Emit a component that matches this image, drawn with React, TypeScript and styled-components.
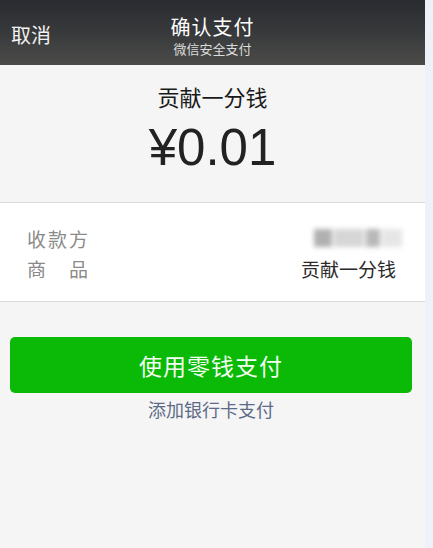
import React from "react";
import styled, { createGlobalStyle } from "styled-components";

const GlobalStyle = createGlobalStyle`
  html, body {
    margin: 0;
    padding: 0;
    height: 100%;
    background: #eef2f8;
  }
  body {
    font-family: "Liberation Sans", "Noto Sans CJK SC", sans-serif;
  }
  #root {
    height: 100%;
  }
`;

const Page = styled.div`
  display: flex;
  height: 548px;
  overflow: hidden;
`;

const Screen = styled.div`
  width: 425px;
  display: flex;
  flex-direction: column;
  background: #f5f5f5;
`;

const Edge = styled.div`
  flex: 1;
  background: #eef2f8;
`;

const NavBar = styled.header`
  position: relative;
  height: 65px;
  display: flex;
  flex-direction: column;
  align-items: center;
  justify-content: center;
  padding-top: 8px;
  box-sizing: border-box;
  background: linear-gradient(#2a2b30, #38393b 50%, #4b4c49);
  color: #fff;
`;

const Cancel = styled.span`
  position: absolute;
  left: 11px;
  top: 22px;
  font-size: 20px;
  line-height: 28px;
  color: #f2f2f2;
`;

const NavTitle = styled.div`
  font-size: 20px;
  line-height: 26px;
  letter-spacing: 1px;
`;

const NavSub = styled.div`
  font-size: 13px;
  line-height: 17px;
  color: #dcdcdc;
`;

const Summary = styled.section`
  display: flex;
  flex-direction: column;
  align-items: center;
  padding: 19px 0 24px;
  border-bottom: 1px solid #dcdcdc;
`;

const GoodsName = styled.div`
  font-size: 22px;
  line-height: 30px;
  color: #1a1a1a;
`;

const Amount = styled.div`
  margin-top: 4px;
  font-size: 51px;
  line-height: 60px;
  color: #222;
  font-family: "Liberation Sans", sans-serif;
`;

const InfoList = styled.section`
  background: #fff;
  padding: 20px 29px 18px 27px;
  border-bottom: 1px solid #dcdcdc;
`;

const InfoRow = styled.div`
  display: flex;
  justify-content: space-between;
  align-items: center;
  height: 30px;
`;

const Label = styled.span`
  width: 61px;
  font-size: 19px;
  color: #8a8a8a;
  text-align: justify;
  text-align-last: justify;
`;

const Value = styled.span`
  font-size: 19px;
  color: #2a2a2a;
`;

const Blurred = styled.span`
  display: flex;
  gap: 2px;
  filter: blur(2.5px);
  margin-right: -6px;
`;

const Blot = styled.span<{ $w: number; $tone: string }>`
  width: ${(p) => p.$w}px;
  height: 18px;
  background: ${(p) => p.$tone};
`;

const Actions = styled.div`
  display: flex;
  flex-direction: column;
  align-items: center;
  padding: 35px 13px 0 10px;
`;

const PayButton = styled.button`
  width: 100%;
  height: 56px;
  border: none;
  border-radius: 5px;
  background: #0bba07;
  color: #f4fff2;
  font-family: inherit;
  font-size: 23px;
  letter-spacing: 1px;
`;

const AltLink = styled.a`
  font-size: 18px;
  line-height: 36px;
  color: #5d6b87;
  text-decoration: none;
`;

export default function App() {
  return (
    <>
      <GlobalStyle />
      <Page>
        <Screen>
          <NavBar>
            <Cancel>取消</Cancel>
            <NavTitle>确认支付</NavTitle>
            <NavSub>微信安全支付</NavSub>
          </NavBar>
          <Summary>
            <GoodsName>贡献一分钱</GoodsName>
            <Amount>¥0.01</Amount>
          </Summary>
          <InfoList>
            <InfoRow>
              <Label>收款方</Label>
              <Blurred aria-hidden>
                <Blot $w={18} $tone="#b0b0b0" />
                <Blot $w={30} $tone="#d6d6d6" />
                <Blot $w={14} $tone="#b8b8b8" />
                <Blot $w={20} $tone="#e6e6e6" />
              </Blurred>
            </InfoRow>
            <InfoRow>
              <Label>商品</Label>
              <Value>贡献一分钱</Value>
            </InfoRow>
          </InfoList>
          <Actions>
            <PayButton>使用零钱支付</PayButton>
            <AltLink>添加银行卡支付</AltLink>
          </Actions>
        </Screen>
        <Edge />
      </Page>
    </>
  );
}
